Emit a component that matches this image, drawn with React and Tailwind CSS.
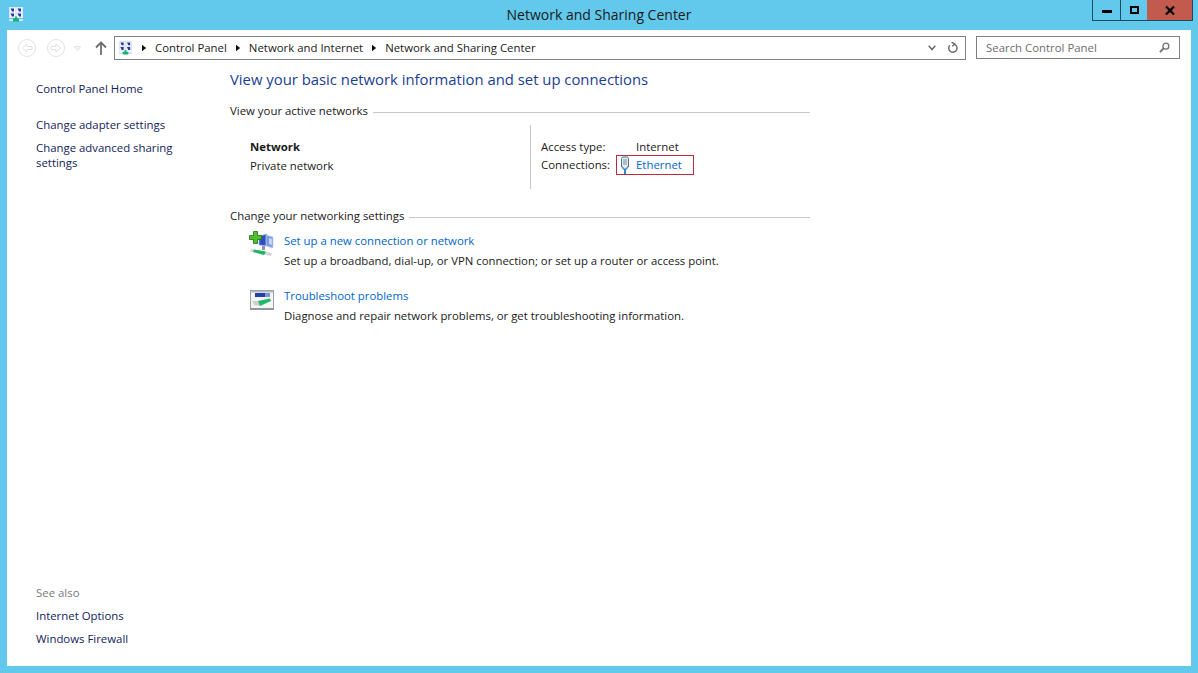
const FONT = "font-['Open_Sans','Noto_Sans',sans-serif]";

function NetIcon({ className }) {
  return (
    <svg viewBox="0 0 16 16" className={className}>
      <rect x="1" y="0" width="14" height="11" fill="#dfe6f6" />
      <rect x="2" y="1" width="5" height="4" fill="#f4f7fd" />
      <rect x="9" y="1" width="5" height="4" fill="#f4f7fd" />
      <rect x="2" y="6" width="5" height="4" fill="#f4f7fd" />
      <rect x="9" y="6" width="5" height="4" fill="#f4f7fd" />
      <path d="M2.5 1.5 H6 V4.5 H4 Z" fill="#1c3a9c" />
      <path d="M9.5 1.5 H13 V4.5 H11 Z" fill="#1c3a9c" />
      <path d="M2.5 6.5 H6 V9.5 H4 Z" fill="#1c3a9c" />
      <path d="M9.5 6.5 H13 V9.5 H11 Z" fill="#1c3a9c" />
      <rect x="1" y="12" width="14" height="2" fill="#d5e4ea" />
      <path d="M7 9.5 H9 V11.5 H11 V14.5 H5 V11.5 H7 Z" fill="#19b076" />
    </svg>
  );
}

function CircleArrow({ dir }) {
  return (
    <svg viewBox="0 0 20 20" className="w-[20px] h-[20px]" fill="none" stroke="#dfe2e4" strokeWidth="1">
      <circle cx="10" cy="10" r="8.5" />
      {dir === "left" ? (
        <path d="M15 8.5 H10 V6 L5.5 10 L10 14 V11.5 H15 Z" />
      ) : (
        <path d="M5 8.5 H10 V6 L14.5 10 L10 14 V11.5 H5 Z" />
      )}
    </svg>
  );
}

function Crumb({ children }) {
  return (
    <>
      <svg viewBox="0 0 6 8" className="w-[5px] h-[8px] shrink-0 ml-[9px] mr-[8px]"><path d="M0 0 L5 4 L0 8 Z" fill="#111" /></svg>
      <span className="text-[#1a1a1a]">{children}</span>
    </>
  );
}

function SectionTitle({ children }) {
  return (
    <div className="flex items-center gap-[5px] w-[580px] h-[16px]">
      <span className="text-[#1a1a1a] whitespace-nowrap">{children}</span>
      <div className="flex-1 h-px bg-[#c8c8c8] mt-[2px]" />
    </div>
  );
}

function AddIcon() {
  return (
    <svg viewBox="0 0 26 26" className="w-[26px] h-[26px] shrink-0">
      <path d="M10 5 L18 3 V15 L10 14 Z" fill="#2f4fc0" stroke="#aebde6" strokeWidth="0.7" />
      <path d="M17 4 L24 6 V17 L17 15 Z" fill="#7f9ae4" stroke="#c6d2ee" strokeWidth="0.7" />
      <path d="M20 7 L23 8 V14 L20 13 Z" fill="#c4d2f2" />
      <path d="M4.5 0.5 H8.5 V4.5 H12.5 V8.5 H8.5 V12.5 H4.5 V8.5 H0.5 V4.5 H4.5 Z" fill="#4fc02c" stroke="#1e6e14" strokeWidth="0.8" />
      <rect x="13" y="15" width="3" height="4" fill="#8d97a2" />
      <path d="M2 18 L23 22 L22 25 L1 20.5 Z" fill="#cfd5d8" />
      <path d="M5 18.5 L17 20.5 L15 24 L4 21 Z" fill="#1fb466" />
    </svg>
  );
}

function FixIcon() {
  return (
    <svg viewBox="0 0 24 20" className="w-[24px] h-[20px] shrink-0">
      <rect x="0.5" y="0.5" width="23" height="19" fill="#f4f5f5" stroke="#9aa2a8" />
      <rect x="1" y="1" width="22" height="1.5" fill="#b5bcc2" />
      <path d="M5 3 H20 V7 H5 Z" fill="#2440a8" />
      <path d="M15 3 H20 V7 H15 Z" fill="#7c94d8" />
      <path d="M2 11 H8 L10 16 L4 15 Z" fill="#c9d3cc" />
      <path d="M8 11 L20 8.5 L21 11 L10 16 Z" fill="#1fb868" />
      <rect x="0" y="18" width="24" height="2" fill="#8f979c" />
    </svg>
  );
}

function PlugIcon() {
  return (
    <svg viewBox="0 0 10 18" className="w-[10px] h-[18px] shrink-0">
      <path d="M2.5 1 H7.5 L8.5 2.5 V11 H7 V13 H3 V11 H1.5 V2.5 Z" fill="#e4ebf1" stroke="#4f6f90" />
      <rect x="3.5" y="3" width="1" height="6" fill="#7c90a2" />
      <rect x="5.5" y="3" width="1" height="6" fill="#7c90a2" />
      <rect x="4" y="13" width="2" height="5" fill="#1f8fd6" />
    </svg>
  );
}

export default function App() {
  return (
    <div className={`${FONT} w-[1198px] h-[673px] bg-[#63c9ec] flex flex-col overflow-hidden text-[11.4px] leading-[16px]`}>
      {/* Title bar */}
      <div className="h-[30px] shrink-0 flex items-start relative">
        <NetIcon className="w-[16px] h-[16px] ml-[8px] mt-[7px]" />
        <div className="flex-1 text-center text-[14px] leading-[20px] text-[#1a1a1a] mt-[5px] pr-[24px]">Network and Sharing Center</div>
        <div className="absolute right-[5px] top-0 flex h-[21px] border border-t-0 border-[#1c4c60] bg-[#63c9ec]">
          <div className="w-[28px] flex items-center justify-center border-r border-[#1c4c60]">
            <div className="w-[10px] h-[3px] bg-black mt-[3px]" />
          </div>
          <div className="w-[26px] flex items-center justify-center">
            <div className="w-[9px] h-[8px] border-2 border-black" />
          </div>
          <div className="w-[45px] bg-[#c25a4e] flex items-center justify-center">
            <svg viewBox="0 0 10 9" className="w-[10px] h-[9px]" stroke="#000" strokeWidth="2.2" fill="none"><path d="M1 0.5 L9 8.5 M9 0.5 L1 8.5" /></svg>
          </div>
        </div>
      </div>

      {/* Window body */}
      <div className="flex-1 mx-[7px] mb-[7px] bg-white flex flex-col min-h-0">
        {/* Toolbar */}
        <div className="h-[36px] shrink-0 flex items-start pt-[6px] pl-[10px] pr-[11px]">
          <div className="w-[97px] flex items-center h-[24px] shrink-0">
            <CircleArrow dir="left" />
            <div className="w-[9px]" />
            <CircleArrow dir="right" />
            <svg viewBox="0 0 8 5" className="w-[7px] h-[5px] ml-[8px]"><path d="M0.5 0.5 L7.5 0.5 L4 4.5 Z" fill="none" stroke="#d5d8da" /></svg>
            <svg viewBox="0 0 12 14" className="w-[12px] h-[14px] ml-[14px] shrink-0" fill="none" stroke="#6d6d6d" strokeWidth="1.8"><path d="M6 14 V2 M1 6.5 L6 1.5 L11 6.5" /></svg>
          </div>
          <div className="w-[852px] h-[24px] border border-[#7f7f7f] flex items-center shrink-0 pl-[3px] pr-[7px]">
            <NetIcon className="w-[15px] h-[15px] shrink-0" />
            <div className="flex items-center flex-1 whitespace-nowrap">
              <Crumb>Control Panel</Crumb>
              <Crumb>Network and Internet</Crumb>
              <Crumb>Network and Sharing Center</Crumb>
            </div>
            <svg viewBox="0 0 8 6" className="w-[8px] h-[6px] mr-[11px]" fill="none" stroke="#6a6a6a" strokeWidth="1.5"><path d="M0.7 0.7 L4 4.5 L7.3 0.7" /></svg>
            <svg viewBox="0 0 12 13" className="w-[11px] h-[12px]" fill="none" stroke="#6f6f6f" strokeWidth="1.6"><path d="M7.5 2.2 A4.5 4.5 0 1 1 3 3.6" /><path d="M5 0 L8.5 2.3 L5.6 4.6" /></svg>
          </div>
          <div className="w-[204px] h-[23px] ml-[10px] border border-[#7f7f7f] flex items-center justify-between pl-[9px] pr-[9px] shrink-0">
            <span className="text-[#6d6d6d]">Search Control Panel</span>
            <svg viewBox="0 0 12 12" className="w-[11px] h-[11px]" fill="none" stroke="#6f6f6f"><circle cx="7.5" cy="4.5" r="3.2" strokeWidth="1.4" /><path d="M5 7 L1 11" strokeWidth="2" /></svg>
          </div>
        </div>

        {/* Content */}
        <div className="flex-1 flex min-h-0">
          <aside className="w-[223px] shrink-0 pl-[29px] flex flex-col text-[#12235c]">
            <div className="mt-[15px]">Control Panel Home</div>
            <div className="mt-[20px]">Change adapter settings</div>
            <div className="mt-[7px] w-[150px] leading-[15px]">Change advanced sharing settings</div>
            <div className="mt-auto text-[#7a7a7a]">See also</div>
            <div className="mt-[7px]">Internet Options</div>
            <div className="mt-[7px] mb-[19px]">Windows Firewall</div>
          </aside>
          <main className="flex-1 flex flex-col">
            <h1 className="text-[14.85px] leading-[22px] text-[#1a3d94] mt-[2px]">View your basic network information and set up connections</h1>
            <div className="mt-[13px]"><SectionTitle>View your active networks</SectionTitle></div>
            <div className="flex w-[580px] h-[64px] mt-[6px]">
              <div className="w-[301px] pl-[20px] pt-[13px] leading-[18px] text-[#1a1a1a] border-r border-[#c8c8c8]">
                <div className="font-bold">Network</div>
                <div className="mt-px">Private network</div>
              </div>
              <div className="pl-[10px] pt-[14px] text-[#1a1a1a]">
                <div className="flex leading-[16px] h-[16px]">
                  <span className="w-[95px]">Access type:</span>
                  <span>Internet</span>
                </div>
                <div className="flex items-center">
                  <span className="w-[75px]">Connections:</span>
                  <div className="w-[78px] h-[20px] border border-[#c0283c] flex items-center pl-[3px] gap-[6px]">
                    <PlugIcon />
                    <span className="text-[#0066cc]">Ethernet</span>
                  </div>
                </div>
              </div>
            </div>
            <div className="mt-[19px]"><SectionTitle>Change your networking settings</SectionTitle></div>
            <div className="flex mt-[7px] pl-[19px] gap-[9px] text-[11.35px]">
              <AddIcon />
              <div>
                <div className="text-[#0066cc] leading-[20px]">Set up a new connection or network</div>
                <div className="text-[#1a1a1a] leading-[20px]">Set up a broadband, dial-up, or VPN connection; or set up a router or access point.</div>
              </div>
            </div>
            <div className="flex mt-[15px] pl-[20px] gap-[10px] text-[11.35px]">
              <div className="pt-[4px]"><FixIcon /></div>
              <div>
                <div className="text-[#0066cc] leading-[20px]">Troubleshoot problems</div>
                <div className="text-[#1a1a1a] leading-[20px]">Diagnose and repair network problems, or get troubleshooting information.</div>
              </div>
            </div>
          </main>
        </div>
      </div>
    </div>
  );
}
